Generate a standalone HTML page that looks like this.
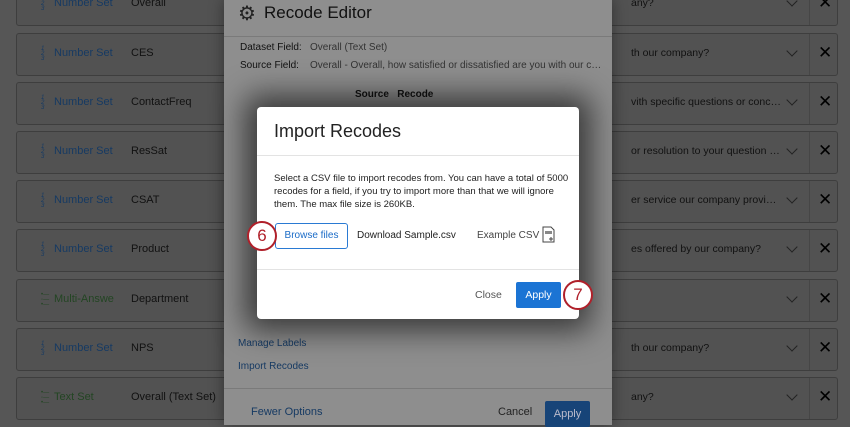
<!DOCTYPE html>
<html><head><style>
body{margin:0;width:850px;height:425px;overflow:hidden;background:#565656;font-family:"Liberation Sans",sans-serif;position:relative}
.row{position:absolute;left:16px;width:820px;height:41px;border:1px solid #3e3e3e;border-radius:3px;background:#525252}
.row .t{position:absolute;left:37px;top:13px;font-size:11px;color:#163a63}
.row .g{color:#234523}
.row .n{position:absolute;left:114px;top:13px;font-size:11px;color:#111}
.row .q{position:absolute;left:614px;top:13px;width:150px;overflow:hidden;text-overflow:ellipsis;font-size:10.5px;color:#111;white-space:nowrap}
.row .sep{position:absolute;left:792px;top:0;width:1px;height:41px;background:#464646}
.row .ch{position:absolute;left:771px;top:13px;width:7px;height:7px;border-right:1px solid #222;border-bottom:1px solid #222;transform:rotate(45deg)}
.row .x{position:absolute;left:801px;top:9px;font-size:17px;color:#000}
.row .ic{position:absolute;left:24px;top:13px;font-size:6px;line-height:5px;color:#163a63;font-style:italic}
.panel{position:absolute;left:224px;top:0;width:388px;height:425px;background:#8e8e8e;box-shadow:0 0 14px rgba(0,0,0,.4)}
.modal{position:absolute;left:257px;top:107px;width:322px;height:212px;background:#fff;border-radius:4px;box-shadow:0 0 30px 12px rgba(0,0,0,.6)}
.circ{position:absolute;width:26px;height:26px;border:2px solid #b0202a;border-radius:50%;background:#fff;text-align:center;line-height:26px;font-size:17px;color:#b0202a}
</style></head><body>
<div class="row" style="top:-17px"><div class="ic">1<br>2<br>3</div><span class="t">Number Set</span><span class="n">Overall</span><span class="q">any?</span><div class="ch"></div><div class="sep"></div><span class="x">✕</span></div>
<div class="row" style="top:33px"><div class="ic">1<br>2<br>3</div><span class="t">Number Set</span><span class="n">CES</span><span class="q">th our company?</span><div class="ch"></div><div class="sep"></div><span class="x">✕</span></div>
<div class="row" style="top:82px"><div class="ic">1<br>2<br>3</div><span class="t">Number Set</span><span class="n">ContactFreq</span><span class="q">vith specific questions or concerns?</span><div class="ch"></div><div class="sep"></div><span class="x">✕</span></div>
<div class="row" style="top:131px"><div class="ic">1<br>2<br>3</div><span class="t">Number Set</span><span class="n">ResSat</span><span class="q">or resolution to your question or concerns</span><div class="ch"></div><div class="sep"></div><span class="x">✕</span></div>
<div class="row" style="top:180px"><div class="ic">1<br>2<br>3</div><span class="t">Number Set</span><span class="n">CSAT</span><span class="q">er service our company provides?</span><div class="ch"></div><div class="sep"></div><span class="x">✕</span></div>
<div class="row" style="top:229px"><div class="ic">1<br>2<br>3</div><span class="t">Number Set</span><span class="n">Product</span><span class="q">es offered by our company?</span><div class="ch"></div><div class="sep"></div><span class="x">✕</span></div>
<div class="row" style="top:279px"><div class="ic" style="color:#234523;font-style:normal">•—<br>◦—<br>•—</div><span class="t g">Multi-Answe</span><span class="n">Department</span><div class="ch"></div><div class="sep"></div><span class="x">✕</span></div>
<div class="row" style="top:328px"><div class="ic">1<br>2<br>3</div><span class="t">Number Set</span><span class="n">NPS</span><span class="q">th our company?</span><div class="ch"></div><div class="sep"></div><span class="x">✕</span></div>
<div class="row" style="top:377px"><div class="ic" style="color:#234523;font-style:normal">•—<br>◦—<br>•—</div><span class="t g">Text Set</span><span class="n">Overall (Text Set)</span><span class="q">any?</span><div class="ch"></div><div class="sep"></div><span class="x">✕</span></div>

<div class="panel">
<div style="position:absolute;left:14px;top:1px;font-size:20px;color:#222">⚙</div>
<div style="position:absolute;left:40px;top:3px;font-size:17px;color:#111">Recode Editor</div>
<div style="position:absolute;left:0;top:36px;width:388px;height:1px;background:#7a7a7a"></div>
<div style="position:absolute;left:16px;top:42px;font-size:10px;color:#111">Dataset Field:</div>
<div style="position:absolute;left:86px;top:42px;font-size:10px;color:#333">Overall (Text Set)</div>
<div style="position:absolute;left:16px;top:60px;font-size:10px;color:#111">Source Field:</div>
<div style="position:absolute;left:86px;top:60px;width:292px;overflow:hidden;text-overflow:ellipsis;font-size:10px;color:#333;white-space:nowrap">Overall - Overall, how satisfied or dissatisfied are you with our company?</div>
<div style="position:absolute;left:131px;top:89px;font-size:10px;font-weight:bold;color:#111">Source&nbsp;&nbsp; Recode</div>
<div style="position:absolute;left:14px;top:338px;font-size:10px;color:#163a63">Manage Labels</div>
<div style="position:absolute;left:14px;top:361px;font-size:10px;color:#163a63">Import Recodes</div>
<div style="position:absolute;left:0;top:388px;width:388px;height:1px;background:#7a7a7a"></div>
<div style="position:absolute;left:27px;top:406px;font-size:11px;color:#163a63">Fewer Options</div>
<div style="position:absolute;left:274px;top:406px;font-size:11px;color:#222">Cancel</div>
<div style="position:absolute;left:321px;top:401px;width:45px;height:26px;background:#174478;border-radius:2px;color:#bbc;font-size:11px;text-align:center;line-height:26px">Apply</div>
</div>

<div class="modal">
<div style="position:absolute;left:17px;top:14px;font-size:18px;color:#222">Import Recodes</div>
<div style="position:absolute;left:0;top:48px;width:322px;height:1px;background:#e3e3e3"></div>
<div style="position:absolute;left:17px;top:65px;width:295px;font-size:9.5px;line-height:13px;color:#222">Select a CSV file to import recodes from. You can have a total of 5000 recodes for a field, if you try to import more than that we will ignore them. The max file size is 260KB.</div>
<div style="position:absolute;left:18px;top:116px;width:71px;height:24px;border:1px solid #2a7ad3;border-radius:3px;color:#1a6bc7;font-size:10px;text-align:center;line-height:24px">Browse files</div>
<div style="position:absolute;left:100px;top:123px;font-size:10px;color:#222">Download Sample.csv</div>
<div style="position:absolute;left:220px;top:123px;font-size:10px;color:#444">Example CSV</div>
<svg style="position:absolute;left:285px;top:119px" width="13" height="17" viewBox="0 0 13 17"><path d="M1 1h8l3 3v12H1z" fill="none" stroke="#444"/><rect x="3" y="5" width="7" height="3" fill="#888"/><path d="M9 11v4M7 13h4" stroke="#444"/></svg>
<div style="position:absolute;left:0;top:162px;width:322px;height:1px;background:#e3e3e3"></div>
<div style="position:absolute;left:218px;top:182px;font-size:10.5px;color:#555">Close</div>
<div style="position:absolute;left:259px;top:175px;width:45px;height:26px;background:#1b74d4;border-radius:2px;color:#fff;font-size:10.5px;text-align:center;line-height:26px">Apply</div>
</div>
<div class="circ" style="left:247px;top:221px">6</div>
<div class="circ" style="left:563px;top:280px">7</div>
</body></html>
